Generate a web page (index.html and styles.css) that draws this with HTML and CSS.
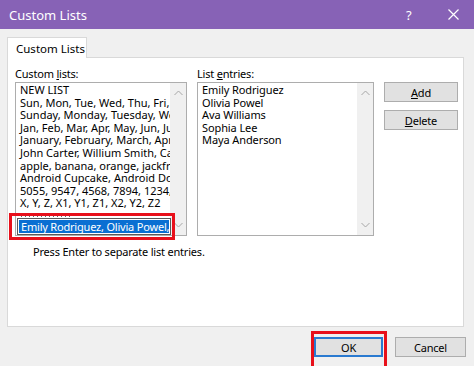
FILE: index.html
```html
<!DOCTYPE html>
<html>
<head>
<meta charset="utf-8">
<link rel="stylesheet" href="styles.css">
</head>
<body>
<div class="window">
  <div class="titlebar">
    <span class="title">Custom Lists</span>
    <span class="help">?</span>
    <span class="close"><svg width="11" height="11" viewBox="0 0 11 11"><path d="M0.5 0.5 L10.5 10.5 M10.5 0.5 L0.5 10.5" stroke="#fff" stroke-width="1.2" fill="none"/></svg></span>
  </div>
  <div class="body">
    <div class="tabs"><div class="tab">Custom Lists</div></div>
    <div class="panel">
      <div class="cols">
        <div class="col col-left">
          <div class="label">Custom <u>l</u>ists:</div>
          <div class="listbox lb-left">
            <div class="items">
              <div class="row">NEW LIST</div>
              <div class="row">Sun, Mon, Tue, Wed, Thu, Fri, Sat</div>
              <div class="row">Sunday, Monday, Tuesday, Wednesday</div>
              <div class="row">Jan, Feb, Mar, Apr, May, Jun, Jul</div>
              <div class="row">January, February, March, April</div>
              <div class="row">John Carter, Willium Smith, Carl</div>
              <div class="row">apple, banana, orange, jackfruit</div>
              <div class="row">Android Cupcake, Android Donut</div>
              <div class="row">5055, 9547, 4568, 7894, 1234, 1</div>
              <div class="row">X, Y, Z, X1, Y1, Z1, X2, Y2, Z2</div>
              <div class="marks"></div>
            </div>
            <div class="scroll">
              <svg class="arr" width="9" height="6" viewBox="0 0 9 6"><path d="M0.5 5 L4.5 1 L8.5 5" stroke="#a6a6a6" stroke-width="1" fill="none"/></svg>
              <svg class="arr" width="9" height="6" viewBox="0 0 9 6"><path d="M0.5 1 L4.5 5 L8.5 1" stroke="#a6a6a6" stroke-width="1" fill="none"/></svg>
            </div>
            <div class="edit"><span class="sel">Emily Rodriguez, Olivia Powel,</span></div>
          </div>
        </div>
        <div class="col col-right">
          <div class="label">List <u>e</u>ntries:</div>
          <div class="listbox lb-right">
            <div class="items items-right">
              <div class="row">Emily Rodriguez</div>
              <div class="row">Olivia Powel</div>
              <div class="row">Ava Williams</div>
              <div class="row">Sophia Lee</div>
              <div class="row">Maya Anderson</div>
            </div>
            <div class="scroll">
              <svg class="arr" width="9" height="6" viewBox="0 0 9 6"><path d="M0.5 5 L4.5 1 L8.5 5" stroke="#a6a6a6" stroke-width="1" fill="none"/></svg>
              <svg class="arr" width="9" height="6" viewBox="0 0 9 6"><path d="M0.5 1 L4.5 5 L8.5 1" stroke="#a6a6a6" stroke-width="1" fill="none"/></svg>
            </div>
          </div>
        </div>
        <div class="col col-btns">
          <div class="btn side-btn"><u>A</u>dd</div>
          <div class="btn side-btn"><u>D</u>elete</div>
        </div>
      </div>
      <div class="hint">Press Enter to separate list entries.</div>
    </div>
    <div class="footer">
      <div class="btn foot-btn ok">OK</div>
      <div class="btn foot-btn">Cancel</div>
    </div>
  </div>
  <div class="mark mark-edit"></div>
  <div class="mark mark-ok"></div>
</div>
</body>
</html>
```
FILE: styles.css
```css
* { box-sizing: border-box; }
html, body { margin: 0; padding: 0; }
body {
  width: 474px;
  height: 366px;
  overflow: hidden;
  background: #f0f0f0;
  font-family: "Noto Sans", "Open Sans", sans-serif;
  font-size: 11px;
  letter-spacing: -0.2px;
  color: #000;
}
.window { position: relative; width: 474px; height: 366px; }
.titlebar {
  height: 29px;
  background: #8762b6;
  color: #fff;
  display: flex;
  align-items: center;
  padding-left: 9px;
  font-size: 13px;
  letter-spacing: 0;
}
.title { flex: 1; }
.help { width: 42px; font-size: 13px; }
.close { width: 26px; display: flex; align-items: center; }
.body { padding: 0 0 0 7px; }
.tabs { display: flex; padding-top: 8px; }
.tab {
  width: 80px;
  height: 21px;
  background: #fff;
  border: 1px solid #d9d9d9;
  border-bottom: none;
  display: flex;
  align-items: center;
  padding-left: 8px;
  font-size: 11.5px;
  letter-spacing: 0;
  margin-bottom: -1px;
  position: relative;
  z-index: 1;
}
.panel {
  width: 457px;
  height: 270px;
  background: #fff;
  border: 1px solid #d9d9d9;
  padding: 9px 0 0 7px;
}
.cols { display: flex; gap: 10px; }
.col { display: flex; flex-direction: column; }
.col-left { width: 172px; }
.col-right { width: 177px; }
.col-btns { width: 74px; padding-top: 15px; gap: 8px; }
.label { height: 15px; line-height: 14px; }
.listbox {
  position: relative;
  height: 154px;
  border: 1px solid #adadad;
  background: #fff;
  display: flex;
}
.items { flex: 1; padding: 1px 0 0 4px; overflow: hidden; white-space: nowrap; line-height: 12.6px; letter-spacing: 0; }
.items-right { padding-left: 4px; letter-spacing: -0.1px; }
.row { height: 12.6px; }
.marks {
  margin-top: 5px;
  margin-left: 1px;
  width: 52px;
  height: 2px;
  background: repeating-linear-gradient(90deg, #6a6a6a 0 1px, transparent 1px 4px);
}
.scroll {
  width: 16px;
  background: #f0f0f0;
  display: flex;
  flex-direction: column;
  justify-content: space-between;
  align-items: center;
  padding: 7px 0 7px;
}
.edit {
  position: absolute;
  left: 1px;
  top: 135px;
  width: 154px;
  height: 17px;
  border: 1px solid #5a5a5a;
  background: #fff;
  padding: 1px;
  letter-spacing: -0.2px;
}
.sel {
  display: block;
  height: 100%;
  background: #0a6fd2;
  color: #fff;
  padding-left: 2px;
  line-height: 13px;
  white-space: nowrap;
  overflow: hidden;
}
.btn {
  height: 20px;
  background: #e1e1e1;
  border: 1px solid #adadad;
  display: flex;
  align-items: center;
  justify-content: center;
}
.hint { padding: 8px 0 0 18px; }
.footer { display: flex; justify-content: flex-end; gap: 12px; padding: 10px 8px 0 0; }
.foot-btn { width: 69px; }
.foot-btn:last-child { width: 71px; }
.ok { border: 2px solid #2a7ad0; }
.mark { position: absolute; border: 3px solid #e8101b; }
.mark-edit { left: 9px; top: 213px; width: 166px; height: 27px; }
.mark-ok { left: 311px; top: 331px; width: 76px; height: 40px; }
```
